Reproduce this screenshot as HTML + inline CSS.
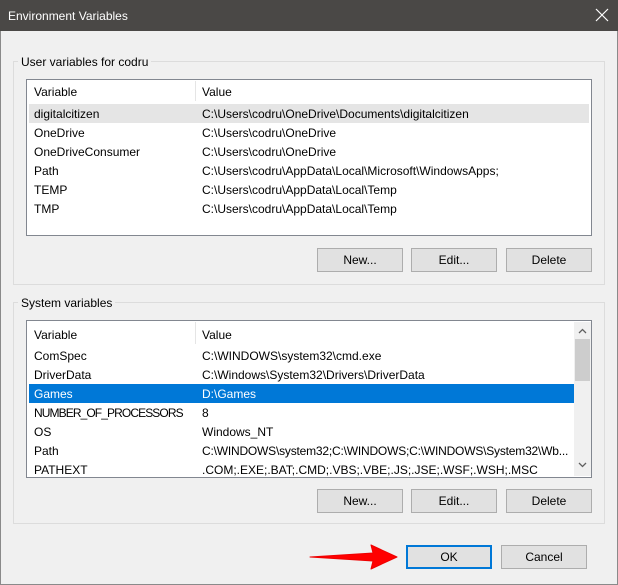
<!DOCTYPE html>
<html><head><style>
*{margin:0;padding:0;box-sizing:border-box}
body{width:618px;height:585px;background:#f0f0f0;font-family:"Liberation Sans",sans-serif;font-size:12px;color:#000;position:relative;overflow:hidden}
.abs{position:absolute}
.title{left:0;top:0;width:618px;height:31px;background:#4a4846;color:#fff;font-size:12px;padding:9px 0 0 8px}
.frame{left:0;top:31px;width:618px;height:554px;border:1px solid #8a8a8a;border-top:none}
.grp{border:1px solid #dcdcdc}
.leg{background:#f0f0f0;padding:0 3px;font-size:12px}
.list{background:#fff;border:1px solid #828790}
.row{position:absolute;left:2px;height:19px;line-height:20px;white-space:nowrap}
.row span{position:absolute;top:0}
.btn{position:absolute;background:#e1e1e1;border:1px solid #adadad;text-align:center;line-height:23px;height:24px;width:86px}
</style></head><body>
<div class="abs title">Environment Variables</div>
<svg class="abs" style="left:595px;top:8px" width="14" height="14"><path d="M1 1L13 13M13 1L1 13" stroke="#fff" stroke-width="1.2"/></svg>
<div class="abs frame"></div>

<div class="abs grp" style="left:13px;top:61px;width:592px;height:224px"></div>
<div class="abs leg" style="left:18px;top:55px">User variables for codru</div>
<div class="abs list" style="left:26px;top:79px;width:566px;height:157px">
<div class="row" style="top:2px;width:560px;"><span style="left:5px">Variable</span><span style="left:173px">Value</span></div>
<div class="abs" style="left:168px;top:1px;width:1px;height:20px;background:#e5e5e5"></div>
<div class="row" style="top:24px;width:560px;background:#e5e5e5"><span style="left:5px">digitalcitizen</span><span style="left:173px">C:\Users\codru\OneDrive\Documents\digitalcitizen</span></div>
<div class="row" style="top:43px"><span style="left:5px">OneDrive</span><span style="left:173px">C:\Users\codru\OneDrive</span></div>
<div class="row" style="top:62px"><span style="left:5px">OneDriveConsumer</span><span style="left:173px">C:\Users\codru\OneDrive</span></div>
<div class="row" style="top:81px"><span style="left:5px">Path</span><span style="left:173px">C:\Users\codru\AppData\Local\Microsoft\WindowsApps;</span></div>
<div class="row" style="top:100px"><span style="left:5px">TEMP</span><span style="left:173px">C:\Users\codru\AppData\Local\Temp</span></div>
<div class="row" style="top:119px"><span style="left:5px">TMP</span><span style="left:173px">C:\Users\codru\AppData\Local\Temp</span></div>
</div>
<div class="btn" style="left:317px;top:248px">New...</div>
<div class="btn" style="left:411px;top:248px">Edit...</div>
<div class="btn" style="left:506px;top:248px">Delete</div>

<div class="abs grp" style="left:13px;top:302px;width:592px;height:222px"></div>
<div class="abs leg" style="left:18px;top:296px">System variables</div>
<div class="abs list" style="left:26px;top:320px;width:566px;height:158px">
<div class="row" style="top:4px;width:545px;"><span style="left:5px">Variable</span><span style="left:173px">Value</span></div>
<div class="abs" style="left:168px;top:1px;width:1px;height:22px;background:#e5e5e5"></div>
<div class="row" style="top:25px"><span style="left:5px">ComSpec</span><span style="left:173px">C:\WINDOWS\system32\cmd.exe</span></div>
<div class="row" style="top:44px"><span style="left:5px">DriverData</span><span style="left:173px">C:\Windows\System32\Drivers\DriverData</span></div>
<div class="row" style="top:63px;width:546px;background:#0078d7;color:#fff"><span style="left:5px">Games</span><span style="left:173px">D:\Games</span></div>
<div class="row" style="top:82px"><span style="left:5px;letter-spacing:-0.9px">NUMBER_OF_PROCESSORS</span><span style="left:173px">8</span></div>
<div class="row" style="top:101px"><span style="left:5px">OS</span><span style="left:173px">Windows_NT</span></div>
<div class="row" style="top:120px"><span style="left:5px">Path</span><span style="left:173px;letter-spacing:-0.2px">C:\WINDOWS\system32;C:\WINDOWS;C:\WINDOWS\System32\Wb...</span></div>
<div class="row" style="top:139px"><span style="left:5px">PATHEXT</span><span style="left:173px">.COM;.EXE;.BAT;.CMD;.VBS;.VBE;.JS;.JSE;.WSF;.WSH;.MSC</span></div>
<div class="abs" style="left:547px;top:1px;width:17px;height:154px;background:#f0f0f0"></div>
<div class="abs" style="left:548px;top:18px;width:15px;height:42px;background:#cdcdcd"></div>
<svg class="abs" style="left:551px;top:7px" width="9" height="6"><path d="M1 5L4.5 1.5L8 5" stroke="#606060" fill="none" stroke-width="1.3"/></svg>
<svg class="abs" style="left:551px;top:141px" width="9" height="6"><path d="M1 1L4.5 4.5L8 1" stroke="#606060" fill="none" stroke-width="1.3"/></svg>
</div>
<div class="btn" style="left:317px;top:489px">New...</div>
<div class="btn" style="left:411px;top:489px">Edit...</div>
<div class="btn" style="left:506px;top:489px">Delete</div>

<div class="btn" style="left:406px;top:545px;border:2px solid #0078d7;line-height:21px">OK</div>
<div class="btn" style="left:501px;top:545px">Cancel</div>
<svg class="abs" style="left:305px;top:540px" width="100" height="35"><path d="M5 17L68 13L66 5L92 17L66 29L68 21Z" fill="#ff0000" stroke="#e00" stroke-width="1" stroke-linejoin="round"/></svg>
</body></html>
